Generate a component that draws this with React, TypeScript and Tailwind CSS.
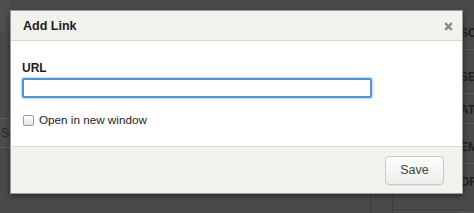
import React from "react";

export default function App() {
  const rows = [
    { h: 50, t: "SC", pt: 26 },
    { h: 44, t: "SE", pt: 20 },
    { h: 30, t: "AT", pt: 9 },
    { h: 40, t: "EM", pt: 16 },
    { h: 49, t: "OR", pt: 11 },
  ];
  return (
    <div
      className="relative w-[474px] h-[213px] overflow-hidden bg-[#4a4a4a]"
      style={{ fontFamily: '"Liberation Sans", Arial, sans-serif' }}
    >
      {/* underlying page */}
      <div className="flex h-full">
        <div className="w-[10px] flex flex-col">
          <div className="h-[32px] bg-[#4f4f4f]" />
          <div className="h-[86px]" />
          <div className="h-[30px] border-y border-[#5c5c5c] bg-[#4c4c4c] text-[12px] leading-[28px] text-[#2a2a2a] pl-[1px]">
            Sc
          </div>
        </div>
        <div className="flex-1 flex flex-col">
          <div className="flex-1" />
          <div className="flex h-[19px]">
            <div className="w-[360px]" />
            <div className="w-[23px] border-l border-r border-[#3c3c3c]" />
            <div className="flex-1 border-b border-[#3c3c3c] mb-[3px]" />
          </div>
        </div>
        <div className="w-[11px] flex flex-col">
          {rows.map((r, i) => (
            <div
              key={i}
              className="border-b border-[#5a5a5a] text-[12px] leading-[14px] font-bold text-[#222] -ml-[3px]"
              style={{ height: r.h, paddingTop: r.pt }}
            >
              {r.t}
            </div>
          ))}
        </div>
      </div>

      {/* modal */}
      <div className="absolute left-[10px] top-[10px] w-[453px] h-[184px] flex flex-col bg-white shadow-[0_2px_6px_rgba(0,0,0,0.45)] border border-[#9a9a9a]">
        <div className="h-[30px] bg-[#f2f2ed] border-b border-[#d6d6d2] flex items-center justify-between pl-[12px] pr-[9px]">
          <span className="text-[12.5px] font-bold text-[#1c1c1c] pt-[1px]">Add Link</span>
          <svg width="9" height="9" viewBox="0 0 9 9" className="mt-[1px]">
            <path d="M1.2 1.2 L7.8 7.8 M7.8 1.2 L1.2 7.8" stroke="#8a8a8a" strokeWidth="2.4" strokeLinecap="butt" />
          </svg>
        </div>
        <div className="h-[105px] bg-white px-[11px] pt-[20px] flex flex-col">
          <label className="text-[12px] font-bold text-[#1c1c1c] leading-[14px]">URL</label>
          <input
            className="mt-[3px] w-[350px] h-[20px] border-2 border-[#4f93d8] rounded-[2px] shadow-[0_0_3px_rgba(70,140,220,0.7)] outline-none bg-white"
            defaultValue=""
          />
          <div className="flex items-center mt-[15px] ml-[1px]">
            <span className="w-[11px] h-[11px] border border-[#9c9c9c] rounded-[2px] bg-gradient-to-b from-white to-[#e6e6e6]" />
            <span className="ml-[5px] text-[11.7px] text-[#222] leading-[14px]">Open in new window</span>
          </div>
        </div>
        <div className="flex-1 bg-[#f3f3ee] border-t border-[#d9d9d5] flex items-start justify-end pr-[18px] pt-[9px]">
          <button className="w-[59px] h-[29px] rounded-[4px] border border-[#c9c9c9] bg-gradient-to-b from-[#fdfdfd] to-[#ececec] text-[12.5px] text-[#444] shadow-[0_1px_1px_rgba(0,0,0,0.06)]">
            Save
          </button>
        </div>
      </div>
    </div>
  );
}
